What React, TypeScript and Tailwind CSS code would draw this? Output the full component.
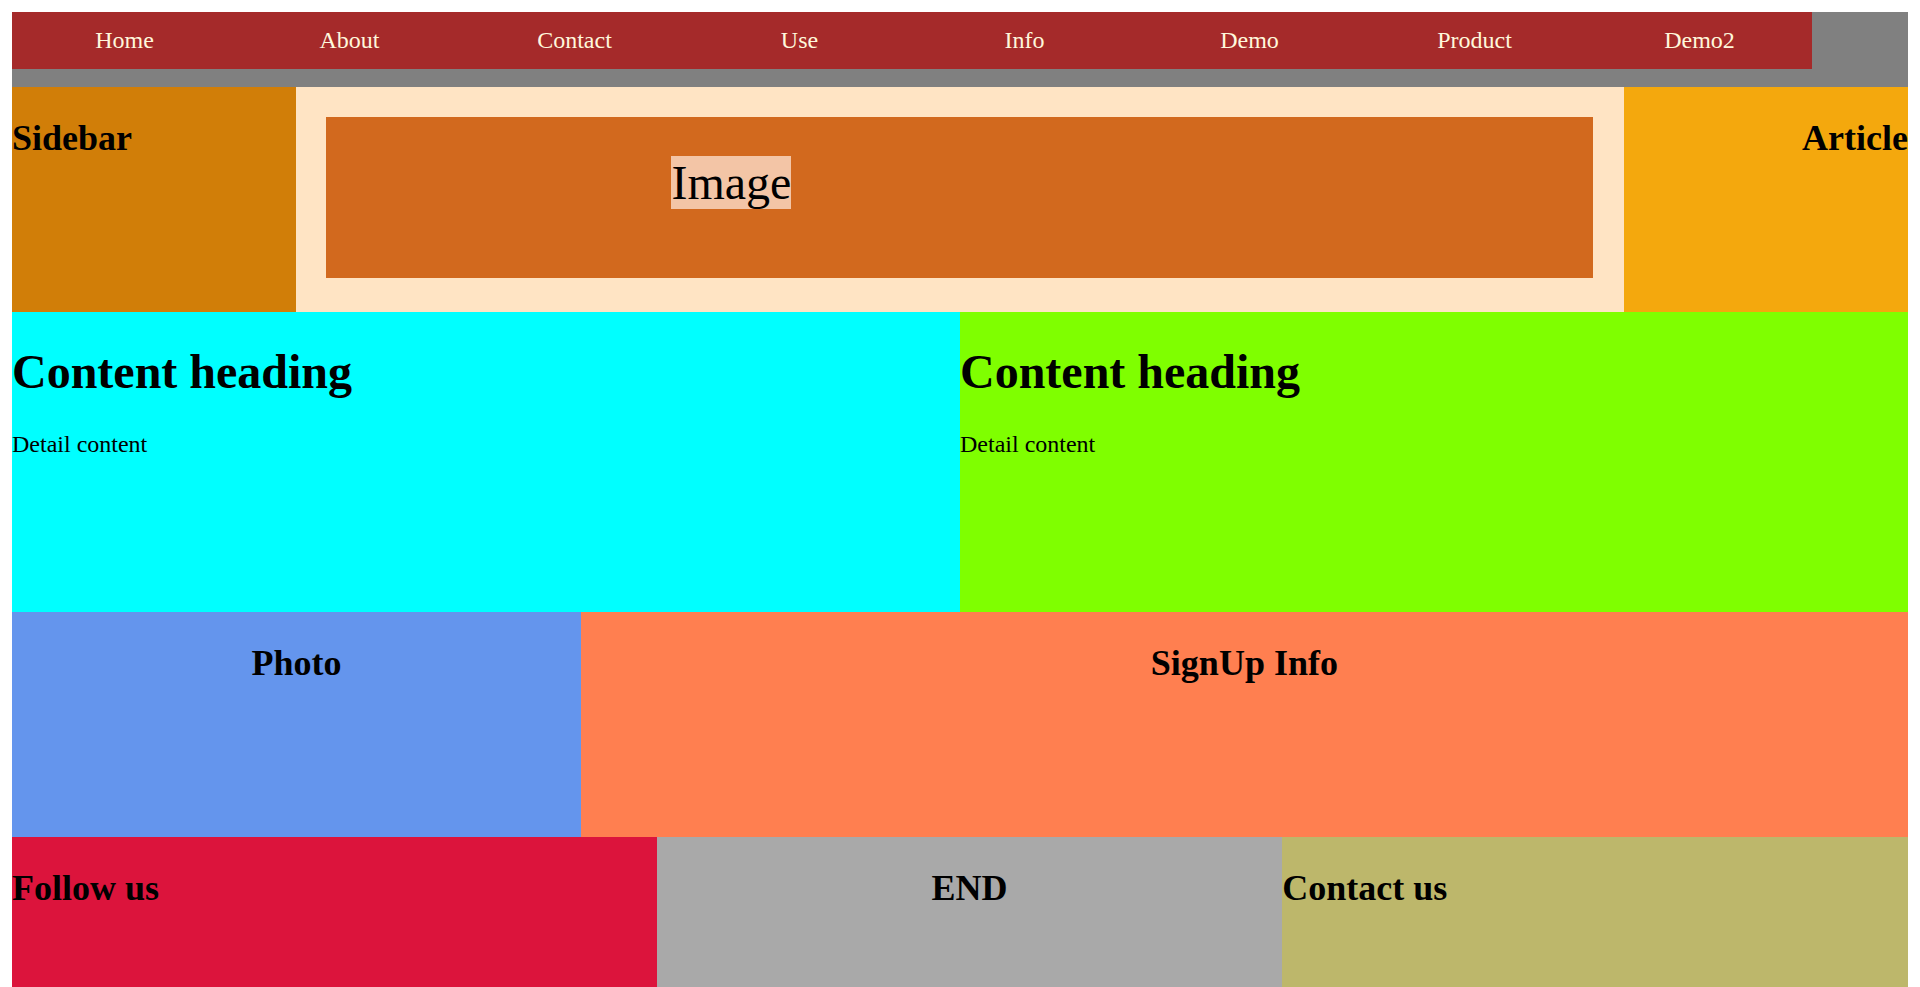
const navItems = ["Home", "About", "Contact", "Use", "Info", "Demo", "Product", "Demo2"];

function Heading2({ children, align = "text-left" }: { children: React.ReactNode; align?: string }) {
  return <h2 className={`mt-[31px] text-[36px] leading-[41px] font-bold ${align}`}>{children}</h2>;
}

function Content({ bg }: { bg: string }) {
  return (
    <div className={`w-1/2 ${bg}`}>
      <h1 className="mt-[32px] text-[48px] leading-[55px] font-bold">Content heading</h1>
      <p className="mt-[32px] text-[24px] leading-[27px]">Detail content</p>
    </div>
  );
}

export default function App() {
  return (
    <div className="m-[12px] font-['Liberation_Serif','Times_New_Roman',serif] text-black">
      <header className="h-[75px] bg-[#808080]">
        <nav className="flex h-[57px] w-[1800px] bg-[#a52a2a]">
          {navItems.map((item) => (
            <a
              key={item}
              className="w-[225px] py-[15px] text-center text-[24px] leading-[27px] text-[#fff8dc]"
            >
              {item}
            </a>
          ))}
        </nav>
      </header>

      <section className="flex h-[225px]">
        <aside className="w-[15%] bg-[#d17e08]">
          <Heading2>Sidebar</Heading2>
        </aside>
        <div className="w-[70%] bg-[#ffe4c4] pl-[30px] pr-[31px] pt-[30px]">
          <div className="h-[161px] bg-[#d2691e] pl-[345px] pt-[39px]">
            <span className="inline-block h-[53px] bg-[#f3c5a6] text-[48px] leading-[53px]">Image</span>
          </div>
        </div>
        <article className="w-[15%] bg-[#f4a80d]">
          <Heading2 align="text-right">Article</Heading2>
        </article>
      </section>

      <section className="flex h-[300px]">
        <Content bg="bg-[#00ffff]" />
        <Content bg="bg-[#7fff00]" />
      </section>

      <section className="flex h-[225px]">
        <div className="w-[30%] bg-[#6495ed]">
          <Heading2 align="text-center">Photo</Heading2>
        </div>
        <div className="w-[70%] bg-[#ff7f50]">
          <Heading2 align="text-center">SignUp Info</Heading2>
        </div>
      </section>

      <footer className="flex h-[225px]">
        <div className="w-[34%] bg-[#dc143c]">
          <Heading2>Follow us</Heading2>
        </div>
        <div className="w-[33%] bg-[#a9a9a9]">
          <Heading2 align="text-center">END</Heading2>
        </div>
        <div className="w-[33%] bg-[#bdb76b]">
          <Heading2>Contact us</Heading2>
        </div>
      </footer>
    </div>
  );
}
